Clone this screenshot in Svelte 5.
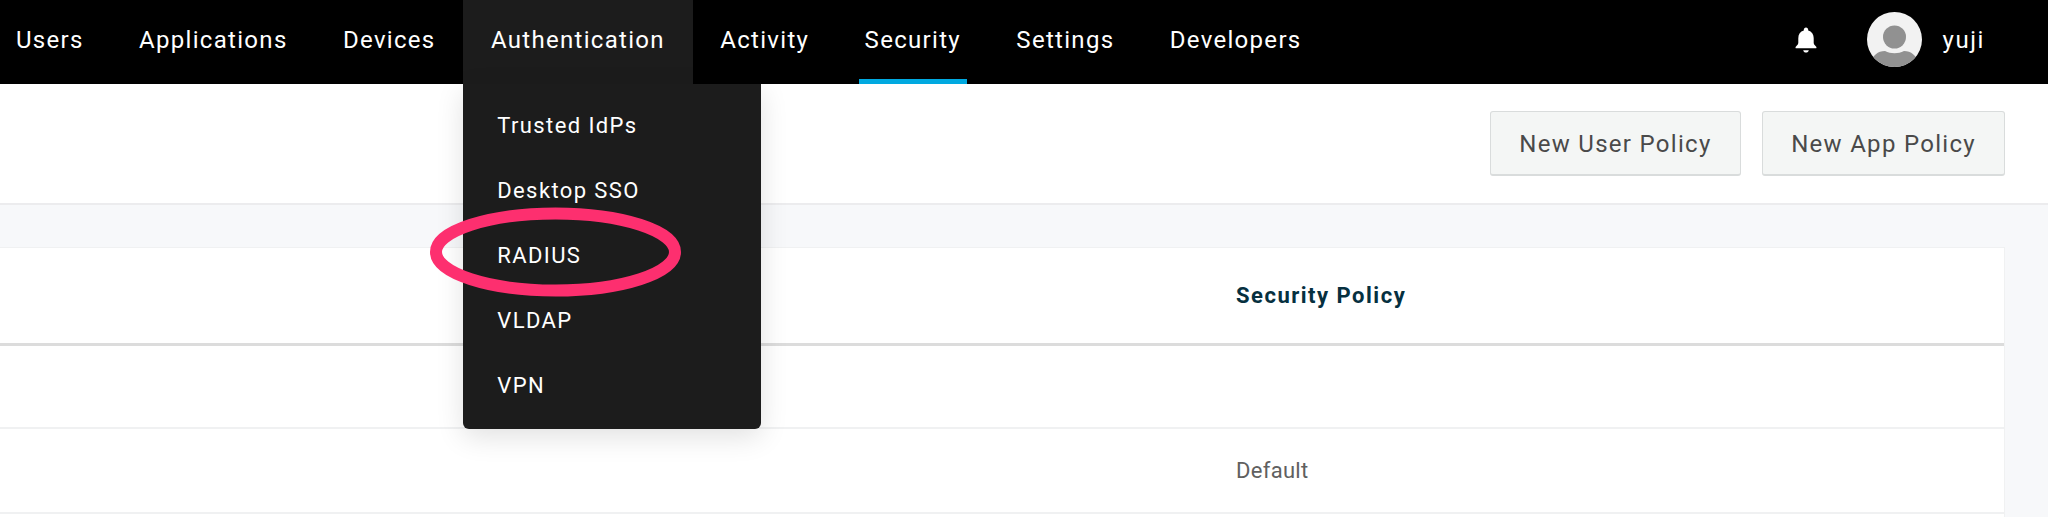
<script>
  const navItems = ['Users', 'Applications', 'Devices', 'Authentication', 'Activity', 'Security', 'Settings', 'Developers'];
  const menuItems = ['Trusted IdPs', 'Desktop SSO', 'RADIUS', 'VLDAP', 'VPN'];
</script>

<div class="page">
  <header class="nav">
    <nav class="nav-links">
      {#each navItems as item}
        <div class="nav-item" class:open={item === 'Authentication'} class:active={item === 'Security'}>
          {item}
          {#if item === 'Authentication'}
            <ul class="menu">
              {#each menuItems as entry}
                <li>{entry}</li>
              {/each}
            </ul>
            <svg class="circle" width="260" height="100" viewBox="0 0 260 100" fill="none">
              <ellipse cx="130.5" cy="50" rx="119.5" ry="38.5" stroke="#fd2f6f" stroke-width="12" />
            </svg>
          {/if}
        </div>
      {/each}
    </nav>
    <div class="nav-right">
      <svg class="bell" width="24" height="26" viewBox="0 0 24 26">
        <path fill="#fff" d="M12 0.5c1.3 0 2.2 1 2.2 2.3v0.6c3.6 1 5.5 4 5.5 7.8v4.6c0 1.4 1 2.6 2.3 3.6 0.6 0.5 0.9 1.9-0.5 1.9H2.5c-1.4 0-1.1-1.4-0.5-1.9 1.3-1 2.3-2.2 2.3-3.6v-4.6c0-3.8 1.9-6.8 5.5-7.8v-0.6C9.800 1.500 10.700 0.500 12 0.500zM9.200 23.200h5.600c-0.300 1.400-1.400 2.400-2.800 2.400s-2.500-1-2.800-2.400z" />
      </svg>
      <svg class="avatar" width="55" height="55" viewBox="0 0 55 55">
        <defs>
          <clipPath id="avatar-clip"><circle cx="27.500" cy="27.500" r="27.500" /></clipPath>
        </defs>
        <circle cx="27.500" cy="27.500" r="27.500" fill="#f2f2f2" />
        <g clip-path="url(#avatar-clip)" fill="#919191">
          <circle cx="27.500" cy="25" r="11.500" />
          <path d="M5 55v-6c0-5 6-10 13-10 3 1.500 6 2.200 9.500 2.200s6.500-0.700 9.500-2.200c7 0 13 5 13 10v6z" />
        </g>
      </svg>
      <span class="user">yuji</span>
    </div>
  </header>

  <section class="toolbar">
    <button>New User Policy</button>
    <button>New App Policy</button>
  </section>

  <main class="content">
    <div class="card">
      <div class="row head"><div>Security Policy</div></div>
      <div class="row empty"></div>
      <div class="row"><div>Default</div></div>
      <div class="row empty"></div>
    </div>
  </main>
</div>

<style>
  :global(body) {
    margin: 0;
    background: #f7f8fa;
  }
  .page {
    width: 2048px;
    height: 517px;
    overflow: hidden;
    font-family: Roboto, "Liberation Sans", sans-serif;
    background: #f7f8fa;
  }
  .nav {
    height: 84px;
    box-sizing: border-box;
    background: #000;
    color: #fff;
    display: flex;
    justify-content: space-between;
    font-size: 24px;
    letter-spacing: 1.3px;
  }
  .nav-links {
    display: flex;
  }
  .nav-item {
    position: relative;
    padding: 0 27.700px;
    line-height: 80px;
    white-space: nowrap;
  }
  .nav-item:first-child {
    padding-left: 16px;
  }
  .nav-item.open {
    background: #1c1c1c;
    z-index: 2;
  }
  .nav-item.active::after {
    content: '';
    position: absolute;
    left: 22px;
    right: 22px;
    bottom: 0;
    height: 5px;
    background: #00a9e0;
  }
  .menu {
    position: absolute;
    left: 0;
    top: 84px;
    width: 298px;
    height: 345px;
    box-sizing: border-box;
    margin: 0;
    padding: 9px 0 0 34px;
    list-style: none;
    background: #1c1c1c;
    border-radius: 0 0 6px 6px;
    box-shadow: 0 8px 28px rgba(0, 0, 0, 0.12);
    font-size: 22px;
    letter-spacing: 1.4px;
  }
  .menu li {
    height: 65px;
    line-height: 65px;
  }
  .circle {
    position: absolute;
    left: -38px;
    top: 202px;
  }
  .nav-right {
    display: flex;
    align-items: center;
    padding: 0 63px 5px 0;
  }
  .bell {
    margin-right: 49px;
  }
  .avatar {
    margin-right: 20px;
  }
  .user {
    line-height: 80px;
    letter-spacing: 1.600px;
  }
  .toolbar {
    height: 121px;
    box-sizing: border-box;
    padding: 27px 43px 0 0;
    background: #fff;
    border-bottom: 2px solid #ececee;
    display: flex;
    justify-content: flex-end;
    align-items: flex-start;
    gap: 21.500px;
  }
  button {
    height: 65px;
    padding: 2px 28px 0;
    background: #f4f6f5;
    border: 1px solid #d9dcdc;
    border-bottom-width: 2px;
    border-radius: 3px;
    color: #4a4a4a;
    font: inherit;
    font-size: 24px;
    letter-spacing: 1.3px;
  }
  .content {
    padding: 42px 43px 0 0;
  }
  .card {
    background: #fff;
    border: 1px solid #f0f1f2;
    border-left: none;
  }
  .row {
    display: grid;
    grid-template-columns: 1fr 768px;
    height: 83px;
    box-sizing: border-box;
    align-items: center;
    border-bottom: 2px solid #f0f1f2;
    color: #606060;
    font-size: 22px;
    letter-spacing: 0.3px;
  }
  .row > div {
    grid-column: 2;
  }
  .row.head {
    height: 98px;
    border-bottom: 3px solid #dcdcdc;
    color: #06303f;
    font-size: 22px;
    font-weight: 700;
    letter-spacing: 1.500px;
  }
  .row:nth-child(3) {
    height: 85px;
  }
</style>
